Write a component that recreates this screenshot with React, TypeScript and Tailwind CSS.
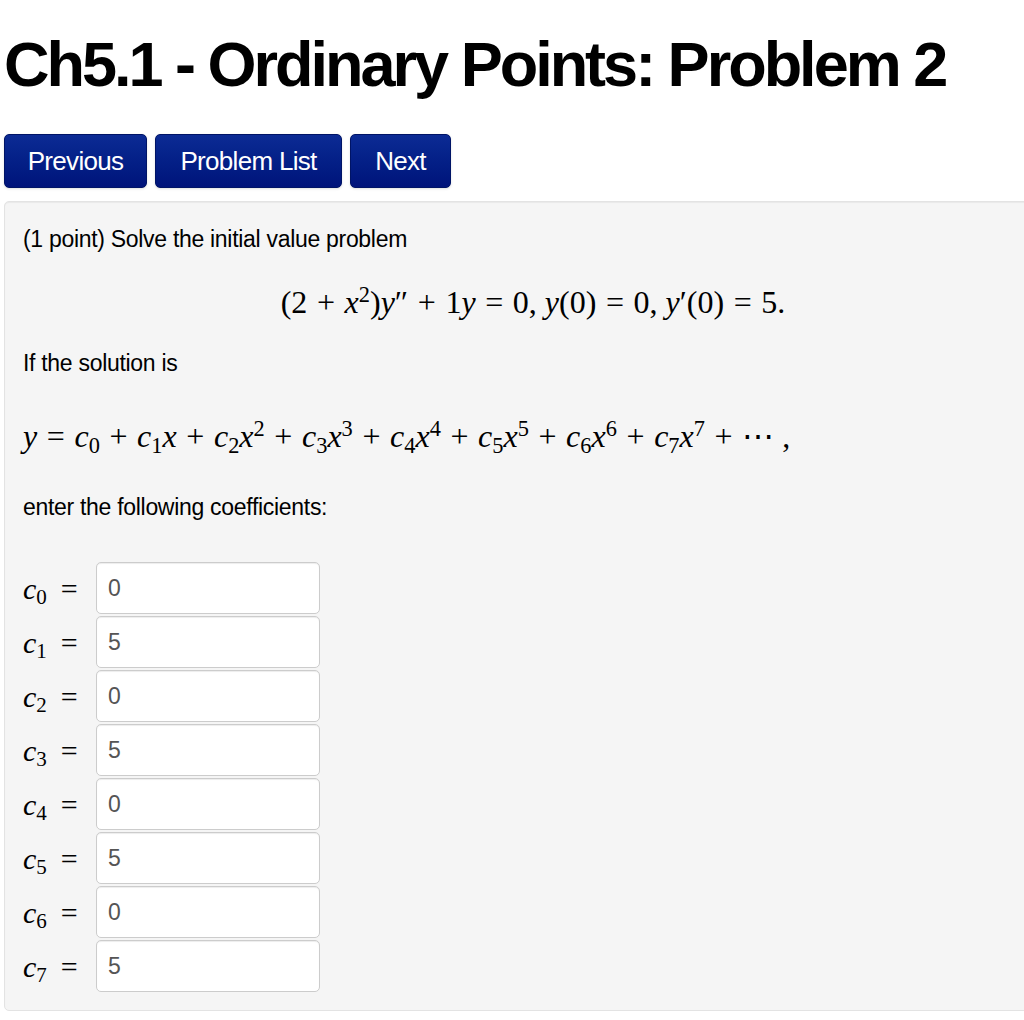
import React from "react";

const coefficients = ["0", "5", "0", "5", "0", "5", "0", "5"];
const powers = [2, 3, 4, 5, 6, 7];

function V({ children }: { children: React.ReactNode }) {
  return <span className="italic">{children}</span>;
}

const Op = ({ c }: { c: string }) => <span className="mx-[0.3em]">{c}</span>;

function NavButton({ label, w }: { label: string; w: string }) {
  return (
    <button
      className={`${w} h-[54px] rounded-[5px] border border-[#001466] bg-gradient-to-b from-[#0c2b94] to-[#00137a] text-[26px] tracking-[-0.7px] text-white shadow-sm`}
    >
      {label}
    </button>
  );
}

export default function App() {
  return (
    <div className="min-h-[1020px] overflow-hidden bg-white font-['Liberation_Sans',Arial,sans-serif] text-black">
      <h1 className="whitespace-nowrap pl-[4px] pt-[26px] text-[63px] leading-[76px] font-bold tracking-[-3px]">
        Ch5.1 - Ordinary Points: Problem 2
      </h1>

      <div className="mt-[32px] flex gap-2 pl-[4px]">
        <NavButton label="Previous" w="w-[143px]" />
        <NavButton label="Problem List" w="w-[187px]" />
        <NavButton label="Next" w="w-[101px]" />
      </div>

      <div className="ml-[4px] mt-[13px] w-[1040px] rounded-[5px] border border-[#e3e3e3] bg-[#f5f5f5] pb-[18px] pl-[18px] pt-[20px] shadow-[inset_0_1px_1px_rgba(0,0,0,0.05)]">
        <p className="text-[23px] leading-[34px] tracking-[-0.3px]">
          (1 point) Solve the initial value problem
        </p>

        <div className="mt-[28px] flex w-[1020px] justify-center font-['Liberation_Serif','Times_New_Roman',serif] text-[32px] leading-[36px]">
          <span>
            (2<Op c="+" />
            <V>x</V>
            <sup className="text-[0.7em]">2</sup>)<V>y</V>″<Op c="+" />1<V>y</V>
            <Op c="=" />0, <V>y</V>(0)<Op c="=" />0, <V>y</V>′(0)<Op c="=" />5.
          </span>
        </div>

        <p className="mt-[26px] text-[23px] leading-[34px] tracking-[-0.3px]">If the solution is</p>

        <div className="mt-[36px] font-['Liberation_Serif','Times_New_Roman',serif] text-[32px] leading-[40px]">
          <V>y</V>
          <Op c="=" />
          <V>c</V>
          <sub className="text-[0.7em]">0</sub>
          <Op c="+" />
          <V>c</V>
          <sub className="text-[0.7em]">1</sub>
          <V>x</V>
          {powers.map((p) => (
            <React.Fragment key={p}>
              <Op c="+" />
              <V>c</V>
              <sub className="text-[0.7em]">{p}</sub>
              <V>x</V>
              <sup className="text-[0.7em]">{p}</sup>
            </React.Fragment>
          ))}
          <Op c="+" />⋯ ,
        </div>

        <p className="mt-[34px] text-[23px] leading-[34px] tracking-[-0.3px]">
          enter the following coefficients:
        </p>

        <div className="mt-[38px] flex flex-col gap-[2px]">
          {coefficients.map((val, i) => (
            <div key={i} className="flex items-center">
              <div className="w-[73px] font-['Liberation_Serif','Times_New_Roman',serif] text-[30px]">
                <V>c</V>
                <sub className="text-[0.7em]">{i}</sub>
                <span className="ml-[14px]">=</span>
              </div>
              <div className="flex h-[52px] w-[224px] items-center rounded-[5px] border border-[#cccccc] bg-white pl-[11px] text-[23px] text-[#555555] shadow-[inset_0_1px_1px_rgba(0,0,0,0.075)]">
                {val}
              </div>
            </div>
          ))}
        </div>
      </div>
    </div>
  );
}
